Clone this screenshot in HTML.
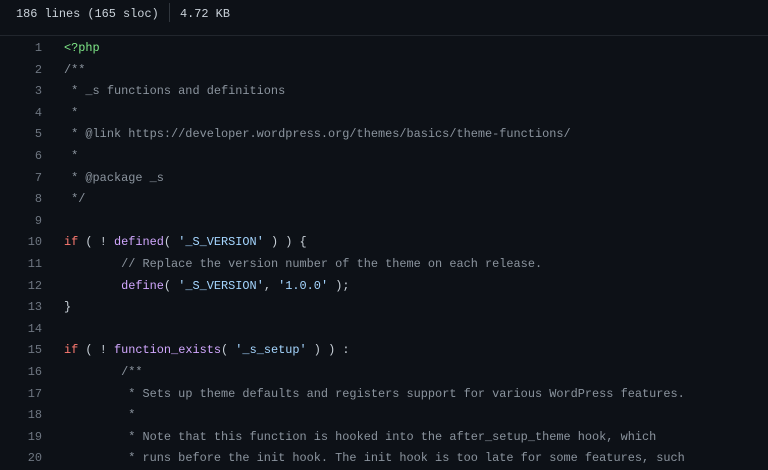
<!DOCTYPE html><html><head><style>
body{margin:0;background:#0d1117;width:768px;height:456px;overflow:hidden;font-family:"Liberation Mono",monospace;font-size:11.9px;color:#c9d1d9}
.hd{height:35px;border-bottom:1px solid #21262d;position:relative;background:#0d1117}
.hd span{position:absolute;top:6px;line-height:16px;color:#c9d1d9}
.sep{position:absolute;left:169px;top:3px;width:1px;height:19px;background:#30363d}
.code{position:absolute;top:38px;left:0}
.l{height:21.6px;line-height:21.6px;white-space:pre;position:relative}
.n{position:absolute;left:0;width:42px;text-align:right;color:#6e7681}
.t{position:absolute;left:64px;tab-size:8}
.c{color:#8b949e}.k{color:#ff7b72}.f{color:#d2a8ff}.s{color:#a5d6ff}.g{color:#7ee787}
</style></head><body>
<div class="hd"><span style="left:16px">186 lines (165 sloc)</span><div class="sep"></div><span style="left:180px">4.72 KB</span></div>
<div class="code">
<div class="l"><span class="n">1</span><span class="t g">&lt;?php</span></div>
<div class="l"><span class="n">2</span><span class="t c">/**</span></div>
<div class="l"><span class="n">3</span><span class="t c"> * _s functions and definitions</span></div>
<div class="l"><span class="n">4</span><span class="t c"> *</span></div>
<div class="l"><span class="n">5</span><span class="t c"> * @link https://developer.wordpress.org/themes/basics/theme-functions/</span></div>
<div class="l"><span class="n">6</span><span class="t c"> *</span></div>
<div class="l"><span class="n">7</span><span class="t c"> * @package _s</span></div>
<div class="l"><span class="n">8</span><span class="t c"> */</span></div>
<div class="l"><span class="n">9</span><span class="t"></span></div>
<div class="l"><span class="n">10</span><span class="t"><span class="k">if</span> ( ! <span class="f">defined</span>( <span class="s">'_S_VERSION'</span> ) ) {</span></div>
<div class="l"><span class="n">11</span><span class="t c">	// Replace the version number of the theme on each release.</span></div>
<div class="l"><span class="n">12</span><span class="t">	<span class="f">define</span>( <span class="s">'_S_VERSION'</span>, <span class="s">'1.0.0'</span> );</span></div>
<div class="l"><span class="n">13</span><span class="t">}</span></div>
<div class="l"><span class="n">14</span><span class="t"></span></div>
<div class="l"><span class="n">15</span><span class="t"><span class="k">if</span> ( ! <span class="f">function_exists</span>( <span class="s">'_s_setup'</span> ) ) :</span></div>
<div class="l"><span class="n">16</span><span class="t c">	/**</span></div>
<div class="l"><span class="n">17</span><span class="t c">	 * Sets up theme defaults and registers support for various WordPress features.</span></div>
<div class="l"><span class="n">18</span><span class="t c">	 *</span></div>
<div class="l"><span class="n">19</span><span class="t c">	 * Note that this function is hooked into the after_setup_theme hook, which</span></div>
<div class="l"><span class="n">20</span><span class="t c">	 * runs before the init hook. The init hook is too late for some features, such</span></div>
</div>
</body></html>
